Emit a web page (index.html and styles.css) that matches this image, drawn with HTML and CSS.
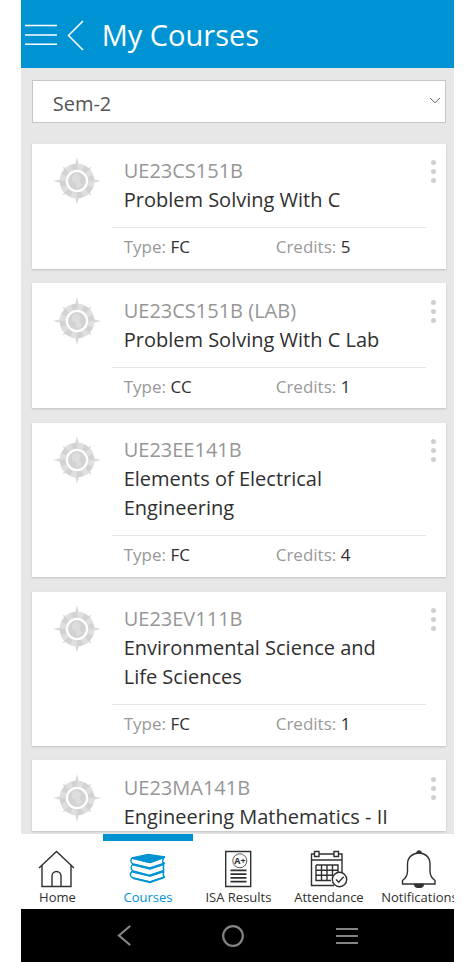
FILE: index.html
```
<!DOCTYPE html>
<html lang="en">
<head>
<meta charset="utf-8">
<title>My Courses</title>
<link rel="stylesheet" href="styles.css">
</head>
<body>
<svg width="0" height="0" class="defs" aria-hidden="true">
  <symbol id="compass" viewBox="0 0 48 48">
    <g fill="#dadada">
      <path d="M24 0l2.6 10h-5.200zM24 48l2.600-10h-5.200zM0 24l10-2.600v5.200zM48 24l-10-2.600v5.200z"/>
      <path d="M9.500 9.500l8 4-4 4zM38.500 9.500l-8 4 4 4zM9.500 38.500l8-4-4-4zM38.500 38.500l-8-4 4-4z"/>
    </g>
    <circle cx="24" cy="24" r="14.300" fill="none" stroke="#d2d2d2" stroke-width="6"/>
    <circle cx="24" cy="24" r="14.300" fill="none" stroke="#dfdfdf" stroke-width="6" stroke-dasharray="5.600 5.630"/>
    <circle cx="24" cy="24" r="9" fill="#d2d2d2"/>
    <path d="M19 19l5-3 4 4-2 4 3 4-5 4-1-6-4-2z" fill="#dddddd"/>
  </symbol>
</svg>
<div class="phone">
  <header class="topbar">
    <svg class="burger" width="32" height="22" viewBox="0 0 32 22"><path d="M0 1.500h32M0 11h32M0 20.300h32"/></svg>
    <svg class="back" width="17" height="31" viewBox="0 0 17 31"><path d="M16 1L1.500 15.500 16 30"/></svg>
    <h1>My Courses</h1>
  </header>
  <main>
    <div class="select"><span>Sem-2</span><svg width="12" height="7" viewBox="0 0 12 7"><path d="M1 1l5 4.700L11 1"/></svg></div>
    <article class="card">
      <svg class="emblem"><use href="#compass"/></svg>
      <div class="info"><div class="code">UE23CS151B</div><div class="name">Problem Solving With C</div></div>
      <div class="dots"><i></i><i></i><i></i></div>
      <div class="meta"><span>Type: <b>FC</b></span><span>Credits: <b>5</b></span></div>
    </article>
    <article class="card">
      <svg class="emblem"><use href="#compass"/></svg>
      <div class="info"><div class="code">UE23CS151B (LAB)</div><div class="name">Problem Solving With C Lab</div></div>
      <div class="dots"><i></i><i></i><i></i></div>
      <div class="meta"><span>Type: <b>CC</b></span><span>Credits: <b>1</b></span></div>
    </article>
    <article class="card">
      <svg class="emblem"><use href="#compass"/></svg>
      <div class="info"><div class="code">UE23EE141B</div><div class="name">Elements of Electrical<br>Engineering</div></div>
      <div class="dots"><i></i><i></i><i></i></div>
      <div class="meta"><span>Type: <b>FC</b></span><span>Credits: <b>4</b></span></div>
    </article>
    <article class="card">
      <svg class="emblem"><use href="#compass"/></svg>
      <div class="info"><div class="code">UE23EV111B</div><div class="name">Environmental Science and<br>Life Sciences</div></div>
      <div class="dots"><i></i><i></i><i></i></div>
      <div class="meta"><span>Type: <b>FC</b></span><span>Credits: <b>1</b></span></div>
    </article>
    <article class="card">
      <svg class="emblem"><use href="#compass"/></svg>
      <div class="info"><div class="code">UE23MA141B</div><div class="name">Engineering Mathematics - II</div></div>
      <div class="dots"><i></i><i></i><i></i></div>
    </article>
  </main>
  <nav class="tabs">
    <a class="tab">
      <svg width="38" height="38" viewBox="0 0 38 38"><path d="M4 14.500V36.500H33V14.500M1 18L18.500 1.500 36 18M14 36.500V26a4.500 4.500 0 0 1 9 0V36.500"/></svg>
      <span>Home</span>
    </a>
    <a class="tab active">
      <svg width="38" height="38" viewBox="0 0 38 38"><path class="solid" d="M3 8L19 4.500 36 7 21 12.500z"/><path d="M3 8c-2 2-1 5 1 6l17 4 15-5M3 8l18 4.500L36 7M34.500 8c-1 2-1 4 0 5M4 14c-3 2-2 6 0 7l16 4.500 15-5M4 14.500l17 4.500 13-4.500M35 14.500c-1 2-1 4 0 6M4 21c-4 2-3 6 0 7l17 4 15-5M4 22l17 4 14-4.500M35 21.500c-1 2-1 4 0 5.500"/><path class="thick" d="M3.500 14.300L21 18.600l14-4.600M3.500 21.300L21 25.700l14-4.600M4 28.200l17 4 14-4.800"/></svg>
      <span>Courses</span>
    </a>
    <a class="tab">
      <svg width="38" height="38" viewBox="0 0 38 38"><path d="M6.700 1.500h25v35h-25z"/><circle class="thin" cx="20.800" cy="10.800" r="7"/><path class="thick" d="M11.500 20.300H27.500M11.500 24.200H27.500M11.500 27.900H27.500M11.500 31.600H27.500"/><text x="21" y="14" text-anchor="middle">A+</text></svg>
      <span>ISA Results</span>
    </a>
    <a class="tab">
      <svg width="38" height="38" viewBox="0 0 38 38"><path d="M4.500 4H1.500V35.500H24M9 4H24M28.500 4H32V23M1.500 10H32M4.500 1.500h4.500v5H4.500zM24 1.500h4.500v5H24zM6 15H28V22M6 15V30.500H21M6 20.200H28M6 25.300H23M11.500 15V30.500M17 15V30.500M22.500 15V25"/><circle class="white" cx="29.500" cy="29.500" r="7.200"/><path d="M26 29.500l2.700 2.700 5-5.500"/></svg>
      <span>Attendance</span>
    </a>
    <a class="tab">
      <svg width="38" height="38" viewBox="0 0 38 38"><path d="M2.500 34V30.500C6 28 7.500 25 7.500 21V14C7.500 7 13 3 19 3s11 4 11 11v7c0 4 1.500 7 5 9.500V34z"/><path class="solid" d="M17 3a2 2 0 0 1 4 0zM14.500 34.500h9c-.5 4-8.500 4-9 0z"/></svg>
      <span>Notifications</span>
    </a>
  </nav>
  <footer class="system">
    <svg width="14" height="21" viewBox="0 0 14 21"><path d="M12.500 1.500L2 10.500l10.500 9"/></svg>
    <svg width="22" height="22" viewBox="0 0 22 22"><circle cx="11" cy="11" r="9.800"/></svg>
    <svg width="22" height="18" viewBox="0 0 22 18"><path d="M0 2h22M0 9h22M0 16h22"/></svg>
  </footer>
</div>
</body>
</html>
```
FILE: styles.css
```
* { box-sizing: border-box; }
body { margin: 0; background: #fff; font-family: "Open Sans", sans-serif; color: #303030; }
svg { display: block; fill: none; flex: none; }
.defs { position: absolute; }
.phone { width: 433px; height: 962px; margin-left: 20.7px; display: flex; flex-direction: column; overflow: hidden; }
.topbar { height: 68px; flex: none; background: #0093d3; display: flex; align-items: center; padding: 2px 0 0 4.500px; }
.topbar svg { stroke: #fff; stroke-width: 1.500; }
.back { margin-left: 9.500px; }
h1 { margin: 0 0 0 18px; font-size: 29px; font-weight: 400; line-height: 40px; color: #fff; white-space: nowrap; }
main { flex: none; height: 765px; overflow: hidden; background: #e7e7e7; padding: 12px 8px 0 11px; }
.select { height: 42.500px; background: #fff; border: 1px solid #c6c6c6; display: flex; align-items: center; justify-content: space-between; padding: 4px 4px 0 20px; font-size: 20px; color: #555; margin-bottom: 21.300px; }
.select svg { stroke: #666; margin-top: -5px; }
.card { background: #fff; box-shadow: 0 1px 2px rgba(0,0,0,.17); display: grid; grid-template-columns: 80px 1fr 20px; padding: 12.500px 0 0; margin-bottom: 14.600px; }
.emblem { width: 48px; height: 48px; margin: 1px 0 0 21.500px; }
.info { padding-left: 12px; font-size: 20px; line-height: 29px; white-space: nowrap; }
.code { color: #969696; }
.dots { display: flex; flex-direction: column; gap: 4px; padding: 4px 0 0 5.500px; }
.dots i { width: 5px; height: 5px; border-radius: 50%; background: #cfcfcf; }
.meta { grid-column: 2; margin-top: 13px; height: 41.500px; border-top: 1.500px solid #e4e4e4; display: grid; grid-template-columns: 152px 1fr; padding: 6px 0 0 12px; font-size: 17px; line-height: 26px; color: #999; white-space: nowrap; }
.meta b { font-weight: 400; color: #303030; }
.tabs { height: 76px; flex: none; background: #fff; border-top: 1px solid #e5e5e5; display: flex; }
.tab { width: 90.500px; flex: none; display: flex; flex-direction: column; align-items: center; border-top: 7px solid transparent; margin-left: 0; padding-top: 9px; font-size: 13px; line-height: 18px; white-space: nowrap; }
.tabs { padding-left: 0; margin-left: -8.500px; }
.tab svg { stroke: #303030; stroke-width: 1.400; }
.tab span { margin-top: 0; }
.tab.active { color: #0093d3; border-top-color: #0093d3; }
.tab.active svg { stroke: #0093d3; }
.tab .solid { fill: #303030; }
.tab.active .solid { fill: #0093d3; }
.tab .thick { stroke-width: 1.800; }
.tab .thin { stroke-width: .8; }
.tab .white { fill: #fff; }
.tab text { font-size: 9px; font-weight: 700; fill: #303030; stroke: none; }
.system { height: 53px; flex: none; background: #000; display: flex; align-items: center; justify-content: center; gap: 91.500px; padding-right: 0; }
.system svg { stroke: #858585; stroke-width: 2.200; stroke-linecap: round; }
```
